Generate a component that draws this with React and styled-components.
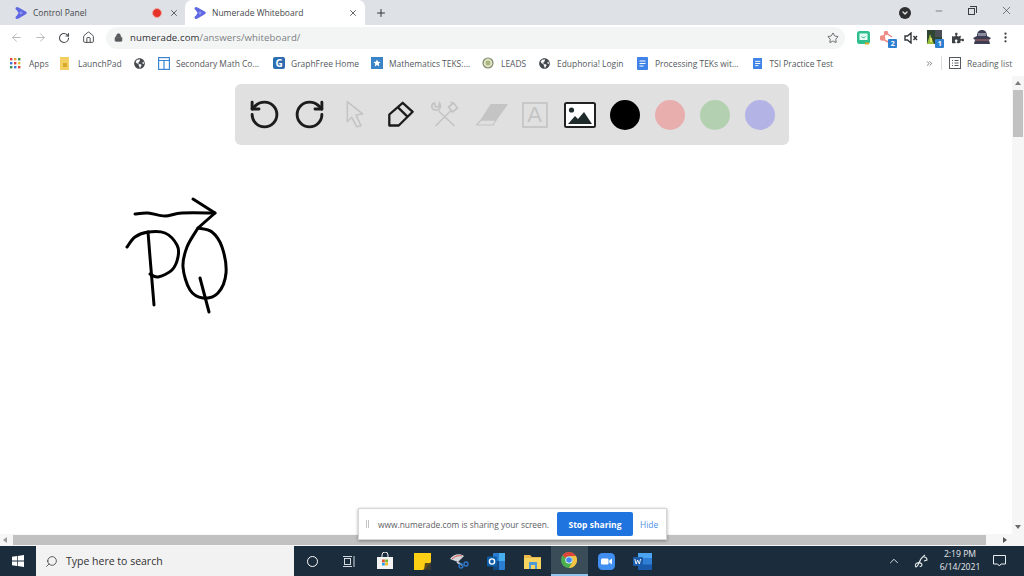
import React from "react";
import styled, { createGlobalStyle } from "styled-components";
import { FaGlobeAmericas, FaPuzzlePiece } from "react-icons/fa";
import { RotateCcw, RotateCw, ArrowLeft, ArrowRight, RotateCw as Reload, Home, Lock, Star, X, Plus, Minus, ChevronUp, Search, ChevronDown, EllipsisVertical, ChevronsRight } from "lucide-react";

const Global = createGlobalStyle`
  html, body { margin: 0; padding: 0; background: #fff; overflow: hidden; }
  #root { width: 1024px; height: 576px; }
  * { box-sizing: border-box; }
`;

const UI = `"Open Sans", "Liberation Sans", sans-serif`;

const Page = styled.div`
  position: relative; width: 1024px; height: 576px; display: flex; flex-direction: column;
  font-family: ${UI}; overflow: hidden; background: #fff;
`;
const TabStrip = styled.div`display: flex; align-items: stretch; height: 25px; background: #dee1e6; padding-left: 8px;`;
const Tab = styled.div`
  display: flex; align-items: center; height: 25px; font-size: 8.5px; color: #45484c;
  width: ${p => p.$active ? 180 : 177}px;
  padding: ${p => p.$active ? "0 7px 0 9px" : "0 6px 0 7px"};
  background: ${p => p.$active ? "#fff" : "transparent"};
  border-radius: 7px 7px 0 0;
`;
const TabTitle = styled.span`flex: 1; margin-left: 6px; white-space: nowrap;`;
const RecDot = styled.span`
  width: 10px; height: 10px; border-radius: 50%; background: #e5352b; border: 1.5px solid #f3a8a4; margin-right: 7px;
`;
const NewTab = styled.div`width: 12px; margin-left: 10px; display: flex; align-items: center; color: #33373a;`;
const WinControls = styled.div`margin-left: auto; display: flex;`;
const WinBtn = styled.div`
  width: ${p => p.$w || 33}px; display: flex; align-items: center; justify-content: center; color: #3b3f42;
  padding-bottom: ${p => p.$raised ? 4 : 0}px;
`;
const ProfileDot = styled.div`
  width: 12px; height: 12px; border-radius: 50%; background: #2d2f31; display: flex; align-items: center; justify-content: center; color: #e4e6e8; margin-top: 1px;
`;
const RestoreIcon = styled.div`
  position: relative; width: 7px; height: 7px; border: 1.2px solid #3b3f42; margin: 2px 0 0 -1px; background: #dee1e6;
  &::after { content: ""; position: absolute; left: 1px; top: -3.2px; width: 6px; height: 6px; border-top: 1.2px solid #3b3f42; border-right: 1.2px solid #3b3f42; }
`;

const ToolRow = styled.div`display: flex; align-items: center; height: 25px; background: #fff; padding-left: 4px;`;
const NavBtn = styled.div`width: 24px; display: flex; align-items: center; justify-content: center; color: ${p => p.$off ? "#b6b9bc" : "#494c50"};`;
const Omnibox = styled.div`
  margin-left: 6px; width: 739px; height: 22px; background: #f3f5f5; border-radius: 11px;
  display: flex; align-items: center; padding: 0 6px 0 8px; font-size: 9.6px; color: #7a7e82; letter-spacing: 0.1px;
`;
const Host = styled.span`color: #2f3235; margin-left: 7px;`;
const StarSlot = styled.span`margin-left: auto; display: flex; color: #45494c;`;
const Exts = styled.div`display: flex; padding-left: 7px;`;
const ExtBtn = styled.div`position: relative; width: 23.6px; height: 20px; display: flex; align-items: center; justify-content: center; color: #3e4144;`;
const Badge = styled.span`
  position: absolute; right: 2px; bottom: 0; width: 9px; height: 9px; background: #2f7fd1; color: #fff; font-size: 7px; font-weight: 700;
  line-height: 9px; text-align: center; border-radius: 1px;
`;

const BookmarkBar = styled.div`
  display: flex; align-items: center; height: 26px; background: #fff; padding-left: 10px; font-size: 8.45px; color: #54585c;
`;
const Mark = styled.div`display: flex; align-items: center; width: ${p => p.$w}px; flex: none; white-space: nowrap;`;
const MarkLabel = styled.span`margin-left: ${p => p.$gap ?? 7}px;`;
const ReadingLabel = styled.span`margin-left: 6px; width: 57px; white-space: nowrap;`;
const GLetter = styled.span`
  width: 12px; height: 12px; border-radius: 2px; background: #2c6cb0; color: #fff; font-size: 10px; font-weight: 700; line-height: 12px; text-align: center;
`;
const Overflow = styled.div`margin-left: auto; display: flex; align-items: center; color: #5a5e62;`;
const Separator = styled.span`width: 1px; height: 14px; background: #dcdfe2; margin: 0 7px 0 7px;`;

const Main = styled.div`flex: 1; display: flex; min-height: 0;`;
const Canvas = styled.div`position: relative; flex: 1; background: #fff;`;
const Drawing = styled.svg`position: absolute; left: 0; top: 0;`;
const Board = styled.div`
  display: flex; align-items: center; width: 554px; height: 61px; margin: 8px 0 0 235px; padding: 0 7px;
  background: #e0e0e0; border-radius: 6px;
`;
const Cell = styled.div`width: 45px; height: 45px; flex: none; display: flex; align-items: center; justify-content: center; color: ${p => p.$off ? "#c4c4c4" : "#1c1c1c"};`;
const Swatch = styled.div`width: 30px; height: 30px; border-radius: 50%; background: ${p => p.$c};`;
const TextTool = styled.div`
  width: 26px; height: 26px; border: 2px solid #c8c8c8; color: #c4c4c4; font: 22px/22px "Liberation Sans", sans-serif; text-align: center;
`;
const VScroll = styled.div`width: 12px; background: #f6f6f6; display: flex; flex-direction: column; align-items: center; color: #6d6d6d;`;
const VThumb = styled.div`width: 10px; height: 47px; margin-top: 5px; background: #c1c1c1;`;
const ScrollArrow = styled.div`
  height: 0; width: 0; border-left: 3px solid transparent; border-right: 3px solid transparent;
  ${p => p.$up ? "border-bottom: 4px solid #7b7b7b; margin-top: 5px;" : "border-top: 4px solid #6b6b6b; margin-top: auto; margin-bottom: 5px;"}
`;
const HScroll = styled.div`height: 12px; background: #f6f6f6; display: flex; align-items: center; padding-bottom: 1px;`;
const HArrow = styled.div`
  width: 0; height: 0; border-top: 3px solid transparent; border-bottom: 3px solid transparent; flex: none;
  ${p => p.$left ? "border-right: 4px solid #9b9b9b; margin: 0 6px 0 3px;" : "border-left: 4px solid #555; margin: 0 0 0 17px;"}
`;
const HThumb = styled.div`width: 973px; height: 10px; background: #c1c1c1; flex: none;`;

const ShareBar = styled.div`
  position: absolute; left: 358px; top: 508px; width: 309px; height: 32px; background: #fff; border: 1px solid #d6d6d6;
  box-shadow: 0 1px 3px rgba(0,0,0,.35); display: flex; align-items: center; padding-left: 7px; font-size: 8.4px; color: #5c6064;
`;
const Grip = styled.span`width: 3px; height: 8px; border-left: 1px solid #c4c4c4; border-right: 1px solid #c4c4c4; margin-right: 9px;`;
const ShareText = styled.span`white-space: nowrap; width: 179px;`;
const StopBtn = styled.div`
  width: 76px; height: 24px; background: #1f74e0; color: #fff; border-radius: 2px; font-weight: 700; font-size: 8.5px;
  display: flex; align-items: center; justify-content: center;
`;
const HideLink = styled.span`margin-left: 7px; color: #4d8fe3;`;

const Taskbar = styled.div`display: flex; height: 30px; background: #1b2d3c; color: #fff;`;
const StartBtn = styled.div`width: 36px; display: flex; align-items: center; justify-content: center;`;
const SearchBox = styled.div`
  width: 258px; background: #f2f2f2; color: #303030; display: flex; align-items: center; padding-left: 9px; font-size: 10.5px;
`;
const SearchGlyph = styled.span`display: flex; transform: scaleX(-1);`;
const SearchText = styled.span`margin-left: 8px;`;
const TaskSlot = styled.div`
  width: ${p => p.$w || 36.8}px; flex: none; display: flex; align-items: center; justify-content: center;
  ${p => p.$active && "background: #3b4c59; border-bottom: 2px solid #8fc5ee;"}
`;
const Ring = styled.span`width: 11px; height: 11px; border: 1.6px solid #fff; border-radius: 50%;`;
const Tray = styled.div`margin-left: auto; display: flex; padding-right: 12px; align-items: center;`;
const TraySlot = styled.div`width: ${p => p.$w}px; display: flex; justify-content: center; align-items: center; color: #f0f3f5;`;
const Clock = styled.div`width: 52px; text-align: center; font-size: 8.6px; line-height: 13px; color: #e4e8ec;`;

function smooth(pts) {
  let d = `M${pts[0][0]} ${pts[0][1]}`;
  for (let i = 0; i < pts.length - 1; i++) {
    const p0 = pts[i - 1] || pts[i], p1 = pts[i], p2 = pts[i + 1], p3 = pts[i + 2] || p2;
    const c1 = [p1[0] + (p2[0] - p0[0]) / 6, p1[1] + (p2[1] - p0[1]) / 6];
    const c2 = [p2[0] - (p3[0] - p1[0]) / 6, p2[1] - (p3[1] - p1[1]) / 6];
    d += ` C${c1[0]} ${c1[1]} ${c2[0]} ${c2[1]} ${p2[0]} ${p2[1]}`;
  }
  return d;
}

const Logo = () => (
  <svg width="12" height="12" viewBox="0 0 12 12" fill="#5f68e2">
    <path d="M.5 1.5Q.5 0 2 0q1 0 2 .8l7.2 4q1 1.2 0 2.3l-7.2 4.1Q3 12 2 12 .5 12 .5 10.5q0-1 1.3-1.8L3.6 6 1.8 3.3Q.5 2.5.5 1.5z" />
    <circle cx="6" cy="6" r="1.4" fill="#8f96ee" />
  </svg>
);
const AppsIcon = () => {
  const c = ["#d9453a", "#e9a13b", "#3f8f4f", "#3b78d8", "#d9453a", "#e9c13b", "#3f8f4f", "#3b78d8", "#d9453a"];
  return (
    <svg width="11" height="11" viewBox="0 0 11 11">
      {c.map((f, i) => <rect key={i} x={(i % 3) * 4} y={Math.floor(i / 3) * 4} width="2.4" height="2.4" fill={f} />)}
    </svg>
  );
};
const FolderPad = () => (
  <svg width="10" height="13" viewBox="0 0 10 13"><rect width="9" height="13" y="0" fill="#f3cf62" /><rect x="3" y="6" width="4" height="4" fill="#d9a92e" /></svg>
);
const SiteIcon = () => (
  <svg width="12" height="13" viewBox="0 0 12 13" fill="none" stroke="#3d86d6" strokeWidth="1.2"><rect x=".6" y=".6" width="10.8" height="11.8" /><path d="M.6 3.5h10.8M6 3.5v9" /></svg>
);
const StarBox = () => (
  <svg width="12" height="12" viewBox="0 0 12 12"><rect width="12" height="12" fill="#3a83c6" /><path d="M6 2.4l1.1 2.4 2.5.3-1.9 1.7.6 2.6L6 8.1 3.7 9.4l.6-2.6-1.9-1.7 2.5-.3z" fill="#fff" /></svg>
);
const LeadsIcon = () => (
  <svg width="12" height="12" viewBox="0 0 12 12"><circle cx="6" cy="6" r="5" fill="#dfe3c4" stroke="#7f8a6b" strokeWidth="1.2" /><circle cx="6" cy="6" r="2.4" fill="#a9b57d" /></svg>
);
const DocIcon = () => (
  <svg width="11" height="13" viewBox="0 0 11 13"><rect width="11" height="13" rx="1" fill="#3f83e8" /><path d="M2.5 4h6M2.5 6.5h6M2.5 9h4" stroke="#fff" strokeWidth="1.1" /></svg>
);
const ReadingIcon = () => (
  <svg width="12" height="12" viewBox="0 0 12 12" fill="none" stroke="#55595d"><rect x=".5" y=".5" width="11" height="11" /><path d="M3 3.5h1M5.5 3.5h4M3 6h1M5.5 6h4M3 8.5h1M5.5 8.5h4" /></svg>
);
const GreenExt = () => (
  <svg width="13" height="14" viewBox="0 0 13 14"><rect width="13" height="13" rx="2.5" fill="#2fbf8f" /><rect x="2.5" y="2.5" width="8" height="6.5" fill="#e7fff6" /><path d="M4.5 5.5c1 1.5 3 1.5 4 0" stroke="#2fa27c" fill="none" /><rect x="8" y="11.5" width="4" height="2" fill="#d9a92e" /></svg>
);
const RedExt = () => (
  <svg width="15" height="13" viewBox="0 0 15 13" fill="none" stroke="#ee8c86" strokeWidth="1.5"><circle cx="2.5" cy="7" r="2" fill="#ee8c86" /><circle cx="6" cy="2" r="1.5" fill="#ee8c86" /><path d="M3 6l3-4 6 4M3 8l5 3" /></svg>
);
const MuteExt = () => (
  <svg width="14" height="12" viewBox="0 0 14 12" fill="none" stroke="#33373a" strokeWidth="1.4"><path d="M1 4h2.5L7 1v10L3.5 8H1z" /><path d="M9.5 4l3.5 4M13 4L9.5 8" /></svg>
);
const PhotoExt = () => (
  <svg width="15" height="15" viewBox="0 0 15 15"><rect width="15" height="14" fill="#2e4632" /><rect x="8" width="7" height="7" fill="#4a4f57" /><path d="M0 14l3-10 4 10z" fill="#9ac13a" /><rect x="3" y="8" width="2" height="4" fill="#e4df6a" /></svg>
);
const AvatarExt = () => (
  <svg width="18" height="15" viewBox="0 0 18 15"><path d="M4 6c0-4 2-6 5-6s5 2 5 6l4 2-2 2 1 4H1l1-4-2-2z" fill="#3c3c52" /><rect x="5" y="3" width="8" height="3" fill="#8a8aa0" /><path d="M2 10h14" stroke="#8d5a62" strokeWidth="1.5" /></svg>
);
const WinLogo = () => (
  <svg width="12" height="12" viewBox="0 0 12 12" fill="#fff"><path d="M0 1.7L5 1v4.6H0zM5.7.9L12 0v5.6H5.7zM0 6.4h5V11l-5-.7zM5.7 6.4H12V12l-6.3-.9z" /></svg>
);
const TaskView = () => (
  <svg width="12" height="11" viewBox="0 0 12 11" fill="none" stroke="#e8ecef" strokeWidth=".9"><rect x="1.5" y="2.5" width="6" height="6" /><path d="M0 .5h9M0 10.5h9M11 0v11" /></svg>
);
const StoreIcon = () => (
  <svg width="18" height="18" viewBox="0 0 18 18"><path d="M1 5h16v12H1z" fill="#f4f4f4" /><path d="M6 5V3a3 3 0 016 0v2" fill="none" stroke="#f4f4f4" /><rect x="6" y="7.5" width="2.8" height="2.8" fill="#e8532b" /><rect x="9.2" y="7.5" width="2.8" height="2.8" fill="#74b72e" /><rect x="6" y="10.7" width="2.8" height="2.8" fill="#2e9fe6" /><rect x="9.2" y="10.7" width="2.8" height="2.8" fill="#f5bb1c" /></svg>
);
const StickyIcon = () => (
  <svg width="17" height="17" viewBox="0 0 17 17"><rect width="17" height="17" fill="#fcce14" /><path d="M17 9v8H9z" fill="#3a3a35" /><path d="M10 17l7-7H11z" fill="#5a4f1a" /></svg>
);
const SnipIcon = () => (
  <svg width="20" height="17" viewBox="0 0 20 17"><path d="M1 6c3-5 10-6 14-3L9 9z" fill="#d5d7da" /><path d="M3 6c3-3 7-4 10-3" stroke="#d9534f" fill="none" /><path d="M8 9l5 3" stroke="#c9ccd0" strokeWidth="2" /><circle cx="12" cy="13" r="2" fill="none" stroke="#2f77c9" strokeWidth="1.3" /><circle cx="17" cy="11" r="2" fill="none" stroke="#2f77c9" strokeWidth="1.3" /></svg>
);
const OutlookIcon = () => (
  <svg width="18" height="17" viewBox="0 0 18 17"><rect x="6" y="0" width="12" height="17" rx="1" fill="#2a7dd0" /><rect x="12" y="0" width="6" height="8" fill="#46b0ee" /><rect x="6" y="8" width="6" height="9" fill="#14497f" /><rect x="0" y="3.5" width="10" height="10" rx="1" fill="#0d5ea8" /><circle cx="5" cy="8.5" r="2.6" fill="none" stroke="#fff" strokeWidth="1.4" /></svg>
);
const FolderIcon = () => (
  <svg width="17" height="15" viewBox="0 0 17 15"><path d="M0 1h6l2 2h9v12H0z" fill="#e9b94a" /><rect y="4" width="17" height="11" fill="#f7d35f" /><rect x="5" y="8" width="8" height="3" fill="#4c9bd6" /><rect x="5" y="11" width="2" height="4" fill="#4c9bd6" /><rect x="11" y="11" width="2" height="4" fill="#4c9bd6" /></svg>
);
const ChromeIcon = () => (
  <svg width="16" height="16" viewBox="0 0 16 16">
    <circle cx="8" cy="8" r="8" fill="#4caf50" />
    <path d="M8 0a8 8 0 016.93 4H8a4 4 0 00-3.46 2L1.5 3.3A8 8 0 018 0z" fill="#e0453a" />
    <path d="M14.93 4A8 8 0 018 16l3.46-6A4 4 0 008 4z" fill="#f6c343" />
    <circle cx="8" cy="8" r="3.6" fill="#fff" /><circle cx="8" cy="8" r="2.8" fill="#4285f4" />
  </svg>
);
const ZoomIcon = () => (
  <svg width="17" height="17" viewBox="0 0 17 17"><rect width="17" height="17" rx="4.5" fill="#3f8ef0" /><rect x="3" y="5.5" width="7.5" height="6" rx="1.2" fill="#fff" /><path d="M11.2 7.6l2.8-2v6l-2.8-2z" fill="#fff" /></svg>
);
const WordIcon = () => (
  <svg width="19" height="17" viewBox="0 0 19 17"><rect x="5" width="14" height="17" rx="1" fill="#2f7fd6" /><rect x="5" width="14" height="5" fill="#4aa4ef" /><rect x="5" y="11.5" width="14" height="5.5" fill="#1a5aab" /><rect y="4" width="10" height="9" rx="1" fill="#1b5cab" /><path d="M1.8 6l1.3 5 1.6-4 1.6 4 1.3-5" stroke="#fff" fill="none" strokeWidth=".9" /></svg>
);
const PenIcon = () => (
  <svg width="15" height="15" viewBox="0 0 15 15" fill="none" stroke="#e3e7ea" strokeWidth="1.1"><path d="M11 1C8 3 6 6 5 9c-1 2-2 4-3 4-1-1-1-3 1-4 2-1 5 0 5 2 0 1-2 2-2 1" /><path d="M10 3c2 0 3 1 3 3l-3 1" /></svg>
);
const NoticeIcon = () => (
  <svg width="13" height="12" viewBox="0 0 13 12" fill="none" stroke="#e8ecef"><path d="M.5.5h12v8.5H8L6.3 11 4.7 9H.5z" /></svg>
);

const CursorIcon = () => (
  <svg width="30" height="30" viewBox="1 2 30 30" fill="none" stroke="currentColor" strokeWidth="1.6" strokeLinejoin="round"><path d="M8.3 3.7L23.7 16 17 17l5 10.7-4.3 1-5-9.4-4.4 4.4z" /></svg>
);
const PencilIcon = () => (
  <svg width="30" height="30" viewBox="0 1.5 30 30" fill="none" stroke="currentColor" strokeWidth="2.3" strokeLinejoin="round"><path d="M4.3 16L17.7 4.3l10 9L13.7 27H4.3zM12.7 8.7l10 9.6" /></svg>
);
const ToolsIcon = () => (
  <svg width="30" height="30" viewBox="1.5 0 30 30" fill="none" stroke="currentColor" strokeWidth="1.7"><path d="M7 26L23 10M26 26L10 11" /><path d="M4 4c-2 4 1 7 5 6 3-1 4-4 2-7l-1 4-3 0-1-4z" /><path d="M20 7l5-4 4 5-5 4zM24 3l-2-1" /></svg>
);
const EraserIcon = () => (
  <svg width="36" height="22" viewBox="-3 0 36 22" fill="none" stroke="currentColor" strokeWidth="1.2" strokeLinejoin="round"><path d="M16 .6h16L21 16H6z" fill="currentColor" /><path d="M6 16h15l-3 5H1.5z" /></svg>
);
const ImageIcon = () => (
  <svg width="32" height="26" viewBox="0 0 32 26"><rect x="1" y="1" width="30" height="24" rx="1.5" fill="#fff" stroke="#222" strokeWidth="2" /><circle cx="7.5" cy="8" r="2.6" fill="#1f2a2a" /><path d="M4 22l7-8 3 3 6-7 8 12z" fill="#1f2a2a" /></svg>
);

const colours = ["#000000", "#e8aeae", "#b3d1b0", "#b3b3e6"];

const bookmarks = [
  { w: 50, icon: <AppsIcon />, label: "Apps", gap: 8 },
  { w: 74, icon: <FolderPad />, label: "LaunchPad", gap: 8 },
  { w: 24, icon: <FaGlobeAmericas size={11} color="#45484c" /> },
  { w: 115, icon: <SiteIcon />, label: "Secondary Math Co...", gap: 6 },
  { w: 98, icon: <GLetter>G</GLetter>, label: "GraphFree Home", gap: 6 },
  { w: 111, icon: <StarBox />, label: "Mathematics TEKS:...", gap: 6 },
  { w: 57, icon: <LeadsIcon />, label: "LEADS", gap: 7 },
  { w: 98, icon: <FaGlobeAmericas size={11} color="#45484c" />, label: "Eduphoria! Login", gap: 7 },
  { w: 116, icon: <DocIcon />, label: "Processing TEKs wit...", gap: 7 },
];

export default function App() {
  return (
    <Page>
      <Global />
      <TabStrip>
        <Tab>
          <Logo /><TabTitle>Control Panel</TabTitle><RecDot /><X size={10} strokeWidth={2} />
        </Tab>
        <Tab $active>
          <Logo /><TabTitle>Numerade Whiteboard</TabTitle><X size={10} strokeWidth={2} />
        </Tab>
        <NewTab><Plus size={12} strokeWidth={2} /></NewTab>
        <WinControls>
          <WinBtn $w={34}><ProfileDot><ChevronDown size={8} strokeWidth={4} /></ProfileDot></WinBtn>
          <WinBtn $raised><Minus size={10} strokeWidth={1.4} /></WinBtn>
          <WinBtn $w={34} $raised><RestoreIcon /></WinBtn>
          <WinBtn $w={35} $raised><X size={13} strokeWidth={1.2} /></WinBtn>
        </WinControls>
      </TabStrip>

      <ToolRow>
        <NavBtn $off><ArrowLeft size={13} strokeWidth={1.8} /></NavBtn>
        <NavBtn $off><ArrowRight size={13} strokeWidth={1.8} /></NavBtn>
        <NavBtn><Reload size={12} strokeWidth={2.2} /></NavBtn>
        <NavBtn><Home size={13} strokeWidth={1.8} /></NavBtn>
        <Omnibox>
          <Lock size={9} fill="#55595c" color="#55595c" />
          <Host>numerade.com</Host>/answers/whiteboard/
          <StarSlot><Star size={12} strokeWidth={1.6} /></StarSlot>
        </Omnibox>
        <Exts>
          <ExtBtn><GreenExt /></ExtBtn>
          <ExtBtn><RedExt /><Badge>2</Badge></ExtBtn>
          <ExtBtn><MuteExt /></ExtBtn>
          <ExtBtn><PhotoExt /><Badge>1</Badge></ExtBtn>
          <ExtBtn><FaPuzzlePiece size={12} /></ExtBtn>
          <ExtBtn><AvatarExt /></ExtBtn>
          <ExtBtn><EllipsisVertical size={13} strokeWidth={2.2} /></ExtBtn>
        </Exts>
      </ToolRow>

      <BookmarkBar>
        {bookmarks.map((b, i) => (
          <Mark key={i} $w={b.w}>
            {b.icon}
            {b.label && <MarkLabel $gap={b.gap}>{b.label}</MarkLabel>}
          </Mark>
        ))}
        <Mark $w={80}><DocIcon /><MarkLabel $gap={7}>TSI Practice Test</MarkLabel></Mark>
        <Overflow>
          <ChevronsRight size={9} strokeWidth={2} />
          <Separator />
          <ReadingIcon />
          <ReadingLabel>Reading list</ReadingLabel>
        </Overflow>
      </BookmarkBar>

      <Main>
        <Canvas>
          <Board>
            <Cell><RotateCcw size={33} strokeWidth={2.1} /></Cell>
            <Cell><RotateCw size={33} strokeWidth={2.1} /></Cell>
            <Cell $off><CursorIcon /></Cell>
            <Cell><PencilIcon /></Cell>
            <Cell $off><ToolsIcon /></Cell>
            <Cell $off><EraserIcon /></Cell>
            <Cell $off><TextTool>A</TextTool></Cell>
            <Cell><ImageIcon /></Cell>
            {colours.map(c => <Cell key={c}><Swatch $c={c} /></Cell>)}
          </Board>
          <Drawing width="300" height="260" viewBox="0 76 300 260" fill="none" stroke="#000" strokeWidth="3" strokeLinecap="round" strokeLinejoin="round">
            <path d={smooth([[135, 214], [148, 213], [165, 216], [182, 213], [215, 213]])} />
            <path d="M193 199L215 213L198 228" />
            <path d={smooth([[127, 247], [135, 237], [148, 232], [165, 233], [177, 245], [178, 257], [172, 270], [158, 277], [150, 274]])} />
            <path d={smooth([[148, 232], [150, 257], [154, 305]])} />
            <path d={smooth([[198, 228], [187, 247], [183, 267], [190, 290], [203, 298], [218, 293], [226, 273], [222, 247], [212, 232], [198, 228]])} />
            <path d="M200 278L209 312" />
          </Drawing>
        </Canvas>
        <VScroll>
          <ScrollArrow $up />
          <VThumb />
          <ScrollArrow />
        </VScroll>
      </Main>

      <HScroll>
        <HArrow $left />
        <HThumb />
        <HArrow />
      </HScroll>

      <ShareBar>
        <Grip />
        <ShareText>www.numerade.com is sharing your screen.</ShareText>
        <StopBtn>Stop sharing</StopBtn>
        <HideLink>Hide</HideLink>
      </ShareBar>

      <Taskbar>
        <StartBtn><WinLogo /></StartBtn>
        <SearchBox>
          <SearchGlyph><Search size={13} strokeWidth={1.4} /></SearchGlyph>
          <SearchText>Type here to search</SearchText>
        </SearchBox>
        <TaskSlot $w={36}><Ring /></TaskSlot>
        <TaskSlot $w={37}><TaskView /></TaskSlot>
        <TaskSlot><StoreIcon /></TaskSlot>
        <TaskSlot><StickyIcon /></TaskSlot>
        <TaskSlot><SnipIcon /></TaskSlot>
        <TaskSlot><OutlookIcon /></TaskSlot>
        <TaskSlot><FolderIcon /></TaskSlot>
        <TaskSlot $active><ChromeIcon /></TaskSlot>
        <TaskSlot><ZoomIcon /></TaskSlot>
        <TaskSlot><WordIcon /></TaskSlot>
        <Tray>
          <TraySlot $w={28}><ChevronUp size={14} strokeWidth={1.5} /></TraySlot>
          <TraySlot $w={26}><PenIcon /></TraySlot>
          <Clock>2:19 PM<br />6/14/2021</Clock>
          <TraySlot $w={26}><NoticeIcon /></TraySlot>
        </Tray>
      </Taskbar>
    </Page>
  );
}
